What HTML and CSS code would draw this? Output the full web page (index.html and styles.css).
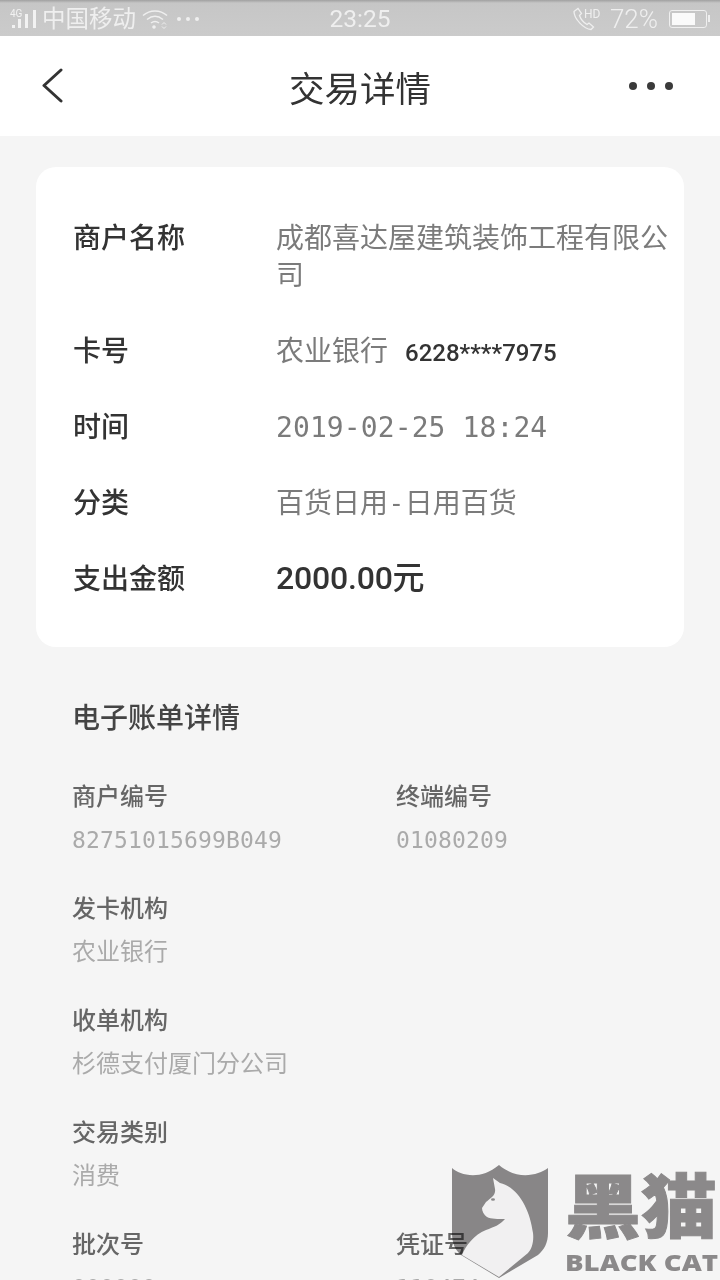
FILE: index.html
```html
<!DOCTYPE html>
<html lang="zh-CN">
<head>
  <meta charset="UTF-8">
  <meta name="viewport" content="width=device-width, initial-scale=1.0">
  <title>交易详情</title>
  <link rel="stylesheet" href="styles.css">
</head>
<body>
  <div class="status-bar">
    <div class="status-left">
      <svg class="signal" width="28" height="22" viewBox="0 0 28 22">
        <text x="0" y="9" class="net-text">4G</text>
        <rect x="2" y="17" width="3" height="3" fill="#f2f2f2"/>
        <rect x="8" y="11" width="3" height="9" fill="#f2f2f2"/>
        <rect x="15" y="6" width="3" height="14" fill="#f2f2f2"/>
        <rect x="23" y="2" width="3" height="18" fill="#f2f2f2"/>
      </svg>
      <span class="carrier">中国移动</span>
      <svg class="wifi" width="26" height="22" viewBox="0 0 26 22" fill="none" stroke="#efefef" stroke-width="1.5">
        <path d="M1 7.500C8 1.500 18 1.500 25 7.500"/>
        <path d="M5 11.500C10 7.500 16 7.500 21 11.500"/>
        <path d="M9 15C11.500 13 14.500 13 17 15"/>
        <circle cx="12" cy="19" r="1.800" fill="#efefef" stroke="none"/>
        <path d="M20 16.500l2 -2 2 2M20 18.500l2 2 2 -2" stroke-width="1"/>
      </svg>
      <span class="more-dots">
        <i></i><i></i><i></i>
      </span>
    </div>
    <div class="status-time">23:25</div>
    <div class="status-right">
      <svg class="call" width="30" height="24" viewBox="0 0 30 24" fill="none" stroke="#efefef" stroke-width="1.300">
        <path d="M2 4.500L6 1.500l3.500 5-2 2c1 3 4 7 7.500 9l2-1.500 4.500 4-2.500 2.500C12 22 2 12 2 4.500z"/>
        <text x="12" y="11" class="hd-text">HD</text>
      </svg>
      <span class="battery-text">72%</span>
      <div class="battery"><div class="battery-fill"></div></div>
      <div class="battery-tip"></div>
    </div>
  </div>

  <div class="nav-bar">
    <svg class="back" width="24" height="36" viewBox="0 0 24 36" fill="none" stroke="#333" stroke-width="3" stroke-linecap="round" stroke-linejoin="round">
      <path d="M20 2L3 17.500 20 33"/>
    </svg>
    <h1>交易详情</h1>
    <div class="nav-more"><i></i><i></i><i></i></div>
  </div>

  <div class="page">
    <div class="card">
      <div class="row row-tall">
        <div class="row-label">商户名称</div>
        <div class="row-value">成都喜达屋建筑装饰工程有限公司</div>
      </div>
      <div class="row">
        <div class="row-label">卡号</div>
        <div class="row-value">农业银行<span class="card-no">6228****7975</span></div>
      </div>
      <div class="row">
        <div class="row-label">时间</div>
        <div class="row-value mono">2019-02-25 18:24</div>
      </div>
      <div class="row">
        <div class="row-label">分类</div>
        <div class="row-value">百货日用<span class="dash">-</span>日用百货</div>
      </div>
      <div class="row">
        <div class="row-label">支出金额</div>
        <div class="row-value amount">2000.00元</div>
      </div>
    </div>

    <div class="bill">
      <h2>电子账单详情</h2>
      <div class="bill-grid">
        <div class="item">
          <div class="item-label">商户编号</div>
          <div class="item-value num">82751015699B049</div>
        </div>
        <div class="item">
          <div class="item-label">终端编号</div>
          <div class="item-value num">01080209</div>
        </div>
        <div class="item item-full">
          <div class="item-label">发卡机构</div>
          <div class="item-value">农业银行</div>
        </div>
        <div class="item item-full">
          <div class="item-label">收单机构</div>
          <div class="item-value">杉德支付厦门分公司</div>
        </div>
        <div class="item item-full">
          <div class="item-label">交易类别</div>
          <div class="item-value">消费</div>
        </div>
        <div class="item">
          <div class="item-label">批次号</div>
          <div class="item-value num">000000</div>
        </div>
        <div class="item">
          <div class="item-label">凭证号</div>
          <div class="item-value num">110474</div>
        </div>
      </div>
    </div>
  </div>

  <div class="watermark">
    <svg class="shield" width="100" height="114" viewBox="0 0 100 114">
      <path class="shield-bg" d="M2 3C10 10 30 16 49 0 68 16 88 10 98 3V68C98 78 94 85 88 90L49 113 11 90C5 85 2 78 2 68z"/>
      <path class="cat" d="M43 13L50 18C68 22 80 44 83 68 84 76 82 84 78 88L49 112 12 90C16 80 24 70 36 65 44 62 50 60 55 54 48 54 41 54 37 52 34 50 32 46 32 43L36 37C41 33 46 30 45 24z"/>
      <ellipse cx="43" cy="34.500" rx="2" ry="1.300" fill="#8b898a"/>
    </svg>
    <div class="wm-text">
      <div class="wm-cn">黑猫</div>
      <div class="wm-en">BLACK CAT</div>
    </div>
  </div>
</body>
</html>
```

FILE: styles.css
```css
* {
  box-sizing: border-box;
}

html, body {
  margin: 0;
  padding: 0;
}

body {
  position: relative;
  width: 720px;
  height: 1280px;
  overflow: hidden;
  background: #f5f5f5;
  font-family: Roboto, "Noto Sans CJK SC", sans-serif;
  color: #333;
}

.status-bar {
  height: 36px;
  display: flex;
  align-items: center;
  justify-content: space-between;
  padding: 1px 10px 0;
  background: linear-gradient(#a0a0a0 0, #c6c6c6 3px, #cbcbcb 100%);
  color: #efefef;
  font-size: 24px;
}

.status-left,
.status-right {
  display: flex;
  align-items: center;
  width: 210px;
}

.status-right {
  justify-content: flex-end;
}

.net-text {
  font-size: 10px;
  fill: #f2f2f2;
}

.hd-text {
  font-size: 12px;
  fill: #efefef;
  stroke: none;
}

.carrier {
  margin-left: 4px;
  font-size: 23.5px;
  line-height: 34px;
}

.wifi {
  margin-left: 6px;
}

.more-dots {
  display: flex;
  gap: 5px;
  margin-left: 9px;
}

.more-dots i {
  width: 4px;
  height: 4px;
  border-radius: 50%;
  background: #efefef;
}

.status-time {
  font-size: 24.5px;
}

.battery-text {
  margin-left: 8px;
  font-size: 26px;
  font-weight: 300;
}

.battery {
  width: 38px;
  height: 18px;
  margin-left: 11px;
  padding: 2px;
  border: 1px solid #efefef;
  border-radius: 3px;
}

.battery-fill {
  width: 23px;
  height: 100%;
  background: #fafafa;
}

.battery-tip {
  width: 2px;
  height: 7px;
  margin-left: 1px;
  background: #efefef;
}

.nav-bar {
  position: relative;
  height: 100px;
  display: flex;
  align-items: center;
  justify-content: space-between;
  padding: 0 47px 0 41px;
  background: #fff;
}

.nav-bar h1 {
  margin: 0;
  position: absolute;
  left: 0;
  right: 0;
  text-align: center;
  font-size: 35.5px;
  font-weight: 400;
  color: #333;
}

.nav-more {
  display: flex;
  gap: 10px;
}

.nav-more i {
  width: 8px;
  height: 8px;
  border-radius: 50%;
  background: #3a3a3a;
}

.page {
  padding: 31px 36px 0;
}

.card {
  height: 480px;
  padding: 53px 16px 0 37px;
  border-radius: 20px;
  background: #fff;
}

.row {
  display: flex;
  height: 37px;
  margin-bottom: 39px;
  font-size: 28px;
  line-height: 37px;
}

.row-tall {
  height: 74px;
}

.row-label {
  flex: none;
  width: 203px;
  font-weight: 500;
  color: #333;
}

.row-value {
  flex: 1;
  color: #7b7b7b;
}

.dash {
  margin: 0 4.5px;
}

.card-no {
  margin-left: 17px;
  font-size: 24px;
  font-weight: 500;
  color: #333;
}

.mono {
  font-family: "DejaVu Sans Mono", monospace;
  font-size: 28px;
  letter-spacing: 0.1px;
}

.amount {
  margin-top: -1px;
  font-size: 32px;
  font-weight: 500;
  letter-spacing: -0.2px;
  color: #333;
}

.bill {
  padding: 52px 0 0 36px;
}

.bill h2 {
  margin: 0 0 40px;
  font-size: 28px;
  line-height: 40px;
  font-weight: 500;
  color: #444;
}

.bill-grid {
  display: grid;
  grid-template-columns: 324px 1fr;
}

.item {
  height: 112px;
}

.item-full {
  grid-column: 1 / -1;
}

.item-label {
  font-size: 24px;
  line-height: 36px;
  font-weight: 500;
  color: #666;
}

.item-value {
  margin-top: 7px;
  font-size: 24px;
  line-height: 36px;
  color: #aaa;
}

.num {
  font-family: "DejaVu Sans Mono", monospace;
  font-size: 23px;
  letter-spacing: 0.15px;
}

/* watermark sits over the page content */
.watermark {
  position: absolute;
  left: 450px;
  top: 1165px;
  display: flex;
}

.shield-bg {
  fill: #8e8c8d;
  mix-blend-mode: multiply;
}

.cat {
  fill: rgba(250, 250, 250, 0.92);
}

.wm-text {
  margin-left: 15px;
  color: #8b898a;
}

.wm-cn {
  margin-top: 3px;
  font-family: "Noto Sans CJK SC", sans-serif;
  font-size: 76px;
  line-height: 70px;
  font-weight: 900;
  white-space: nowrap;
  transform: scaleY(0.92);
  -webkit-text-stroke: 1px #8b898a;
}

.wm-en {
  margin-top: 10px;
  font-family: "Open Sans", sans-serif;
  font-size: 23px;
  line-height: 28px;
  font-weight: 800;
  white-space: nowrap;
  transform: scaleX(1.2);
  transform-origin: left center;
}
```
